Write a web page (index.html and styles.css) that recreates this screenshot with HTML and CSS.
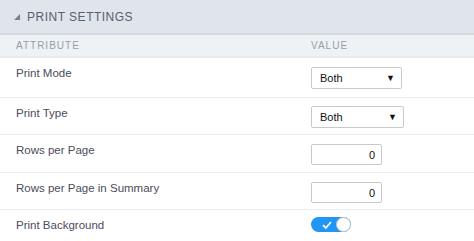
FILE: index.html
```html
<!DOCTYPE html>
<html lang="en">
<head>
    <meta charset="UTF-8">
    <title>Print Settings</title>
    <link rel="stylesheet" href="styles.css">
</head>
<body>
    <div class="panel">
        <div class="panel-title">
            <span class="caret"></span>
            <span>PRINT SETTINGS</span>
        </div>
        <div class="grid head">
            <div>ATTRIBUTE</div>
            <div>VALUE</div>
        </div>
        <div class="grid row r1">
            <div class="label">Print Mode</div>
            <div class="value">
                <div class="select">Both <span class="arrow">&#9660;</span></div>
            </div>
        </div>
        <div class="grid row r2">
            <div class="label">Print Type</div>
            <div class="value">
                <div class="select wide">Both <span class="arrow">&#9660;</span></div>
            </div>
        </div>
        <div class="grid row r3">
            <div class="label">Rows per Page</div>
            <div class="value">
                <div class="input">0</div>
            </div>
        </div>
        <div class="grid row r4">
            <div class="label">Rows per Page in Summary</div>
            <div class="value">
                <div class="input">0</div>
            </div>
        </div>
        <div class="grid row last">
            <div class="label">Print Background</div>
            <div class="value">
                <div class="toggle">
                    <svg class="check" width="10" height="8" viewBox="0 0 10 8">
                        <path d="M1 4.2 L3.8 7 L9 1" fill="none" stroke="#fff" stroke-width="1.8"/>
                    </svg>
                    <span class="knob"></span>
                </div>
            </div>
        </div>
    </div>
</body>
</html>
```

FILE: styles.css
```css
body {
    margin: 0;
    background: #fff;
    font-family: Arial, "Liberation Sans", sans-serif;
}

.panel {
    width: 474px;
    height: 241px;
    overflow: hidden;
}

.panel-title {
    box-sizing: border-box;
    height: 35px;
    background: #dfe5eb;
    border-bottom: 2px solid #d2d9e0;
    display: flex;
    align-items: center;
    gap: 7px;
    padding-left: 14px;
    color: #566170;
    font-size: 12px;
    letter-spacing: 0.5px;
}

.caret {
    width: 0;
    height: 0;
    border-left: 6px solid transparent;
    border-bottom: 6px solid #78828c;
    margin-top: 1px;
}

.grid {
    display: grid;
    grid-template-columns: 295px 1fr;
    padding-left: 16px;
}

.head {
    height: 21px;
    align-items: center;
    background: #eef2f5;
    border-bottom: 2px solid #e6ebef;
    color: #959ea8;
    font-size: 10px;
    letter-spacing: 1px;
}

.row {
    border-bottom: 1px solid #eaedf0;
    align-items: start;
}

.r1 { height: 39px; }
.r2 { height: 36px; }
.r3 { height: 37px; }
.r4 { height: 36px; }
.last { border-bottom: none; }

.label {
    padding-top: 8px;
    font-size: 11.5px;
    line-height: 14px;
    color: #4b4b5c;
}

.value {
    padding-top: 9px;
}

.r2 .value {
    padding-top: 8px;
}

.select, .input {
    box-sizing: border-box;
    height: 22px;
    border: 1px solid #c9c9c9;
    border-radius: 2px;
    font-size: 11px;
    color: #111;
    display: flex;
    align-items: center;
}

.select {
    width: 91px;
    padding: 0 6px 0 8px;
    justify-content: space-between;
}

.select.wide {
    width: 93px;
}

.arrow {
    font-size: 9px;
}

.input {
    width: 71px;
    justify-content: flex-end;
    padding-right: 6px;
    height: 21px;
}

.toggle {
    position: relative;
    width: 40px;
    height: 15px;
    margin-top: -2px;
    border-radius: 8px;
    background: #2196f3;
}

.check {
    position: absolute;
    left: 11px;
    top: 4px;
}

.knob {
    position: absolute;
    right: 0;
    top: 0;
    width: 15px;
    height: 15px;
    box-sizing: border-box;
    border-radius: 50%;
    background: #fff;
    border: 1px solid #c3c8ce;
}
```
